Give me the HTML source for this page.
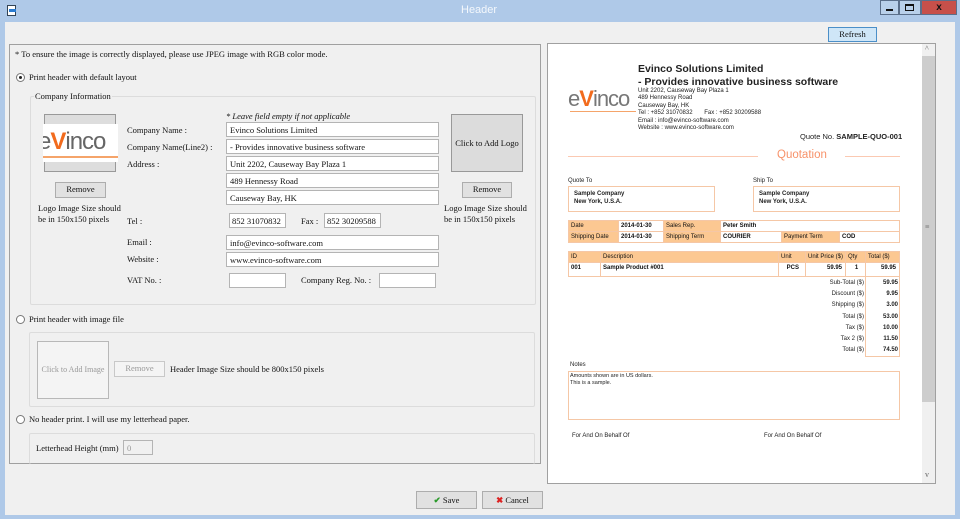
<!DOCTYPE html>
<html><head><meta charset="utf-8"><style>
*{margin:0;padding:0;box-sizing:border-box}
body{width:960px;height:519px;overflow:hidden;background:#afc9e8;position:relative;font-family:"Liberation Serif",serif;font-size:8.5px;color:#111}
.a{position:absolute}
.t{position:absolute;white-space:nowrap}
.in{position:absolute;background:#fff;border:1px solid #b4b4b4;height:15px;padding:1px 3px;font-size:8.5px;line-height:12px;white-space:nowrap;overflow:hidden}
.btn{position:absolute;background:#e1e1e1;border:1px solid #adadad;text-align:center;font-size:8.5px;line-height:13px;white-space:nowrap}
.grp{position:absolute;border:1px solid #dcdcdc;border-radius:2px}
.radio{position:absolute;width:9px;height:9px;border:1px solid #777;border-radius:50%;background:#fff}
.p{font-family:"Liberation Sans",sans-serif;position:absolute;white-space:nowrap;color:#222}
.cell{position:absolute;border:1px solid #f5c7a6;font-family:"Liberation Sans",sans-serif;font-size:6px;line-height:10px;padding-left:2px;white-space:nowrap;font-weight:bold}
.h{background:#fcc892;font-weight:normal}
</style></head><body>
<div class="a" style="left:0;top:0;width:960px;height:22px;background:#afc9e8"></div>
<div class="a" style="left:7px;top:5px;width:9px;height:11px;background:#fff;border:1px solid #345"></div>
<div class="a" style="left:9px;top:9px;width:7px;height:3px;background:#2a7bd0"></div>
<div class="t" style="left:461px;top:4px;font-family:'Liberation Sans',sans-serif;font-size:11px;color:#f4f8fc">Header</div>
<div class="a" style="left:880px;top:0;width:19px;height:15px;background:#b9d0ea;border:1px solid #5b6f8a"></div>
<div class="a" style="left:886px;top:9px;width:7px;height:2px;background:#111"></div>
<div class="a" style="left:899px;top:0;width:22px;height:15px;background:#b9d0ea;border:1px solid #5b6f8a"></div>
<div class="a" style="left:905px;top:4px;width:9px;height:7px;border:1px solid #111;border-top-width:2px"></div>
<div class="a" style="left:921px;top:0;width:36px;height:15px;background:#c7504a;border:1px solid #5b6f8a;color:#111;font:bold 10px 'Liberation Sans',sans-serif;text-align:center;line-height:13px">x</div>
<div class="a" style="left:5px;top:22px;width:950px;height:493px;background:#f0f0f0"></div>

<div class="a" style="left:9px;top:44px;width:532px;height:420px;border:1px solid #a0a0a0"></div>
<div class="t" style="left:15px;top:49px">* To ensure the image is correctly displayed, please use JPEG image with RGB color mode.</div>
<div class="radio" style="left:16px;top:73px"></div><div class="a" style="left:19px;top:76px;width:3px;height:3px;border-radius:50%;background:#222"></div>
<div class="t" style="left:29px;top:72px">Print header with default layout</div>
<div class="grp" style="left:30px;top:96px;width:506px;height:209px"></div>
<div class="t" style="left:34px;top:91px;background:#f0f0f0;padding:0 1px">Company Information</div>

<div class="a" style="left:44px;top:114px;width:72px;height:58px;background:#ddd;border:1px solid #999"></div>
<div class="a" style="left:43px;top:124px;width:75px;height:38px;background:#fff;overflow:hidden">
<div class="t" style="left:-5px;top:4px;font:24px 'Liberation Sans',sans-serif;color:#666;letter-spacing:-1px">e<span style="color:#f26b1d;font-weight:bold">V</span>inco</div>
<div class="a" style="left:0;top:32px;width:75px;height:2px;background:#f5a46a"></div></div>
<div class="btn" style="left:55px;top:182px;width:51px;height:16px">Remove</div>
<div class="t" style="left:38px;top:203px;line-height:11px">Logo Image Size should<br>be in 150x150 pixels</div>

<div class="t" style="left:226px;top:111px;font-style:italic">* Leave field empty if not applicable</div>
<div class="t" style="left:127px;top:125px">Company Name :</div>
<div class="t" style="left:127px;top:142px">Company Name(Line2) :</div>
<div class="t" style="left:127px;top:159px">Address :</div>
<div class="t" style="left:127px;top:216px">Tel :</div>
<div class="t" style="left:127px;top:237px">Email :</div>
<div class="t" style="left:127px;top:254px">Website :</div>
<div class="t" style="left:127px;top:275px">VAT No. :</div>
<div class="in" style="left:226px;top:122px;width:213px">Evinco Solutions Limited</div>
<div class="in" style="left:226px;top:139px;width:213px">- Provides innovative business software</div>
<div class="in" style="left:226px;top:156px;width:213px">Unit 2202, Causeway Bay Plaza 1</div>
<div class="in" style="left:226px;top:173px;width:213px">489 Hennessy Road</div>
<div class="in" style="left:226px;top:190px;width:213px">Causeway Bay, HK</div>
<div class="in" style="left:229px;top:213px;width:57px;padding-left:2px">852 31070832</div>
<div class="t" style="left:301px;top:216px">Fax :</div>
<div class="in" style="left:324px;top:213px;width:57px;padding-left:2px">852 30209588</div>
<div class="in" style="left:226px;top:235px;width:213px">info@evinco-software.com</div>
<div class="in" style="left:226px;top:252px;width:213px">www.evinco-software.com</div>
<div class="in" style="left:229px;top:273px;width:57px"></div>
<div class="t" style="left:301px;top:275px">Company Reg. No. :</div>
<div class="in" style="left:379px;top:273px;width:57px"></div>

<div class="a" style="left:451px;top:114px;width:72px;height:58px;background:#dcdcdc;border:1px solid #999;text-align:center;line-height:56px;white-space:nowrap">Click to Add Logo</div>
<div class="btn" style="left:462px;top:182px;width:50px;height:16px">Remove</div>
<div class="t" style="left:444px;top:203px;line-height:11px">Logo Image Size should<br>be in 150x150 pixels</div>

<div class="radio" style="left:16px;top:315px"></div>
<div class="t" style="left:29px;top:314px">Print header with image file</div>
<div class="grp" style="left:29px;top:332px;width:506px;height:75px"></div>
<div class="a" style="left:37px;top:341px;width:72px;height:58px;background:#f4f4f4;border:1px solid #b8b8b8;color:#999;text-align:center;line-height:56px;white-space:nowrap;font-size:8px;overflow:hidden">Click to Add Image</div>
<div class="btn" style="left:114px;top:361px;width:51px;height:16px;background:#f4f4f4;border-color:#c8c8c8;color:#999">Remove</div>
<div class="t" style="left:170px;top:364px">Header Image Size should be 800x150 pixels</div>

<div class="radio" style="left:16px;top:415px"></div>
<div class="t" style="left:29px;top:414px">No header print. I will use my letterhead paper.</div>
<div class="grp" style="left:29px;top:433px;width:506px;height:31px;border-bottom:none"></div>
<div class="t" style="left:36px;top:443px">Letterhead Height (mm)</div>
<div class="in" style="left:123px;top:440px;width:30px;background:#f0f0f0;color:#999">0</div>

<div class="btn" style="left:416px;top:491px;width:61px;height:18px;line-height:16px"><span style="color:#2a9a2a;font-weight:bold">✔</span> Save</div>
<div class="btn" style="left:482px;top:491px;width:61px;height:18px;line-height:16px"><span style="color:#d22;font-weight:bold">✖</span> Cancel</div>

<div class="btn" style="left:828px;top:27px;width:49px;height:15px;background:#cfe6f7;border:1px solid #4b8fc8;line-height:13px">Refresh</div>
<div class="a" style="left:547px;top:43px;width:389px;height:441px;border:1px solid #a0a0a0;background:#fff"></div>
<div class="a" style="left:922px;top:44px;width:13px;height:439px;background:#f0f0f0"></div>
<div class="a" style="left:922px;top:56px;width:13px;height:346px;background:#cdcdcd"></div>
<div class="t" style="left:925px;top:44px;font-size:8px;color:#666">^</div>
<div class="t" style="left:925px;top:222px;font-size:8px;color:#666">≡</div>
<div class="t" style="left:925px;top:470px;font-size:8px;color:#666">v</div>

<div class="p" style="left:568px;top:86px;font-size:22px;color:#777;letter-spacing:-1px">e<span style="color:#f26b1d;font-weight:bold">V</span>inco</div>
<div class="a" style="left:570px;top:111px;width:66px;height:1px;background:#f5a46a"></div>
<div class="p" style="left:638px;top:63px;font-size:10.5px;font-weight:bold">Evinco Solutions Limited</div>
<div class="p" style="left:638px;top:76px;font-size:10.5px;font-weight:bold">- Provides innovative business software</div>
<div class="p" style="left:638px;top:88px;font-size:6px;line-height:7.4px">Unit 2202, Causeway Bay Plaza 1<br>489 Hennessy Road<br>Causeway Bay, HK<br>Tel : +852 31070832 &nbsp; &nbsp; &nbsp; Fax : +852 30209588<br>Email : info@evinco-software.com<br>Website : www.evinco-software.com</div>
<div class="p" style="left:800px;top:132px;font-size:7.5px">Quote No. <b>SAMPLE-QUO-001</b></div>
<div class="a" style="left:568px;top:156px;width:190px;height:1px;background:#fbc9b2"></div>
<div class="a" style="left:845px;top:156px;width:55px;height:1px;background:#fbc9b2"></div>
<div class="p" style="left:777px;top:149px;font-size:11.5px;color:#f7926a">Quotation</div>
<div class="p" style="left:568px;top:178px;font-size:6px">Quote To</div>
<div class="p" style="left:753px;top:178px;font-size:6px">Ship To</div>
<div class="a" style="left:568px;top:186px;width:147px;height:26px;border:1px solid #f5c7a6"></div>
<div class="a" style="left:753px;top:186px;width:147px;height:26px;border:1px solid #f5c7a6"></div>
<div class="p" style="left:574px;top:191px;font-size:6px;font-weight:bold;line-height:7.5px">Sample Company<br>New York, U.S.A.</div>
<div class="p" style="left:759px;top:191px;font-size:6px;font-weight:bold;line-height:7.5px">Sample Company<br>New York, U.S.A.</div>

<div class="cell h" style="left:568px;top:220px;width:51px;height:12px">Date</div>
<div class="cell" style="left:618px;top:220px;width:46px;height:12px">2014-01-30</div>
<div class="cell h" style="left:663px;top:220px;width:58px;height:12px">Sales Rep.</div>
<div class="cell" style="left:720px;top:220px;width:180px;height:12px">Peter Smith</div>
<div class="cell h" style="left:568px;top:231px;width:51px;height:12px">Shipping Date</div>
<div class="cell" style="left:618px;top:231px;width:46px;height:12px">2014-01-30</div>
<div class="cell h" style="left:663px;top:231px;width:58px;height:12px">Shipping Term</div>
<div class="cell" style="left:720px;top:231px;width:62px;height:12px">COURIER</div>
<div class="cell h" style="left:781px;top:231px;width:59px;height:12px">Payment Term</div>
<div class="cell" style="left:839px;top:231px;width:61px;height:12px">COD</div>

<div class="cell h" style="left:568px;top:251px;width:33px;height:12px">ID</div>
<div class="cell h" style="left:600px;top:251px;width:179px;height:12px">Description</div>
<div class="cell h" style="left:778px;top:251px;width:28px;height:12px">Unit</div>
<div class="cell h" style="left:805px;top:251px;width:41px;height:12px">Unit Price ($)</div>
<div class="cell h" style="left:845px;top:251px;width:21px;height:12px">Qty</div>
<div class="cell h" style="left:865px;top:251px;width:35px;height:12px">Total ($)</div>
<div class="cell" style="left:568px;top:262px;width:33px;height:15px">001</div>
<div class="cell" style="left:600px;top:262px;width:179px;height:15px">Sample Product #001</div>
<div class="cell" style="left:778px;top:262px;width:28px;height:15px;text-align:right;padding-right:6px">PCS</div>
<div class="cell" style="left:805px;top:262px;width:41px;height:15px;text-align:right;padding-right:3px">59.95</div>
<div class="cell" style="left:845px;top:262px;width:21px;height:15px;text-align:center">1</div>
<div class="cell" style="left:865px;top:262px;width:35px;height:15px;text-align:right;padding-right:3px">59.95</div>

<div class="p" style="left:800px;top:278px;width:64px;text-align:right;font-size:6px;line-height:11.2px">Sub-Total ($)<br>Discount ($)<br>Shipping ($)<br>Total ($)<br>Tax ($)<br>Tax 2 ($)<br>Total ($)</div>
<div class="a" style="left:865px;top:277px;width:35px;height:80px;border:1px solid #f5c7a6;border-top:none"></div>
<div class="p" style="left:866px;top:278px;width:32px;text-align:right;font-size:6px;line-height:11.2px;font-weight:bold">59.95<br>9.95<br>3.00<br>53.00<br>10.00<br>11.50<br>74.50</div>

<div class="p" style="left:570px;top:362px;font-size:6px">Notes</div>
<div class="a" style="left:568px;top:371px;width:332px;height:49px;border:1px solid #f5c7a6"></div>
<div class="p" style="left:570px;top:373px;font-size:5.5px;line-height:7px">Amounts shown are in US dollars.<br>This is a sample.</div>
<div class="p" style="left:572px;top:433px;font-size:6px">For And On Behalf Of</div>
<div class="p" style="left:764px;top:433px;font-size:6px">For And On Behalf Of</div>
</body></html>
